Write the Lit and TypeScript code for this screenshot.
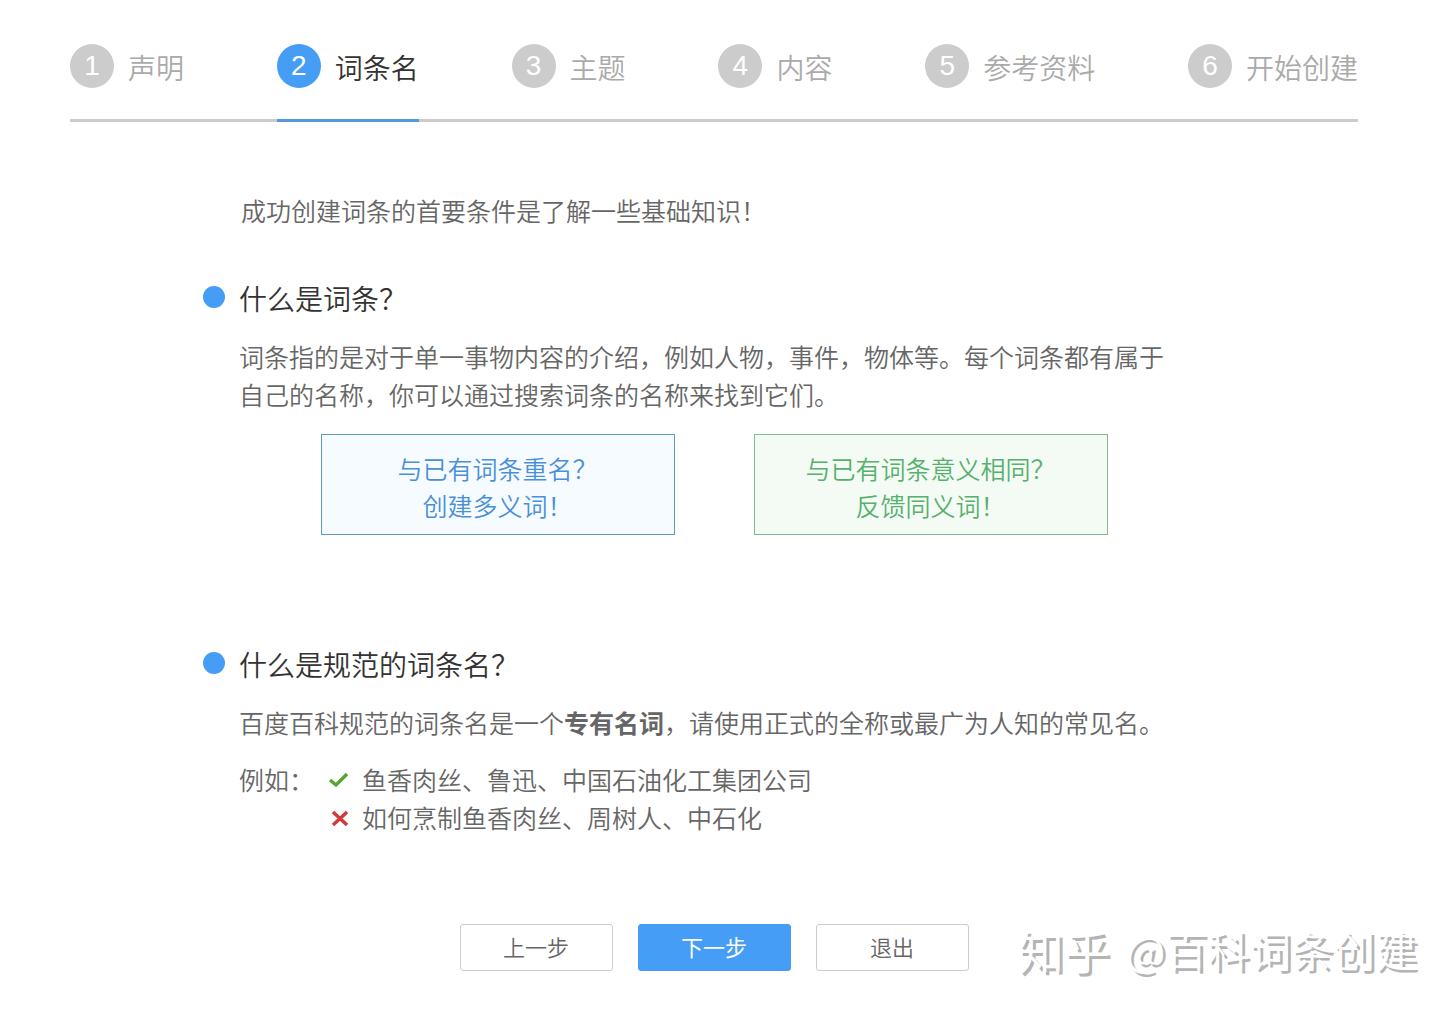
import { LitElement, html, css, svg } from "lit";
import { customElement, property, state } from "lit/decorators.js";
import { classMap } from "lit/directives/class-map.js";

const STEPS = ["声明", "词条名", "主题", "内容", "参考资料", "开始创建"];

@customElement("step-bar")
class StepBar extends LitElement {
  @property({ type: Number }) current = 1;

  static styles = css`
    :host {
      display: block;
    }
    .steps {
      display: flex;
      justify-content: space-between;
      margin: 0;
      padding: 0;
      list-style: none;
      box-shadow: inset 0 -3px #ccc;
    }
    .step {
      display: flex;
      align-items: center;
      gap: 14px;
      padding-bottom: 31px;
      border-bottom: 3px solid transparent;
      color: #aaa;
      font-size: 28px;
      line-height: 44px;
      white-space: nowrap;
    }
    .number {
      width: 44px;
      height: 44px;
      border-radius: 50%;
      background: #ccc;
      color: #fff;
      font-family: "Liberation Sans", Arial, sans-serif;
      text-align: center;
    }
    .step.active {
      border-bottom-color: #5599dd;
      color: #333;
    }
    .step.active .number {
      background: #459df5;
    }
    .label {
      padding-top: 3px;
      line-height: 41px;
    }
  `;

  render() {
    return html`
      <ol class="steps">
        ${STEPS.map((label, i) => {
          const active = i + 1 === this.current;
          return html`<li class=${classMap({ step: true, active })} aria-current=${active ? "step" : "false"}>
            <span class="number">${i + 1}</span><span class="label">${label}</span>
          </li>`;
        })}
      </ol>
    `;
  }
}

const check = svg`<path d="M2 11 L8 16 L19 5" fill="none" stroke="#55a532" stroke-width="3.4"/>`;
const cross = svg`<path d="M5 5 L19 18 M19 5 L5 18" fill="none" stroke="#d23a3a" stroke-width="3.4"/>`;

@customElement("app-root")
class AppRoot extends LitElement {
  @state() private step = 2;

  static styles = css`
    :host {
      display: block;
      position: relative;
      box-sizing: border-box;
      min-height: 100vh;
      padding: 44px 96px 41px 70px;
      background: #fff;
      color: #666;
      font-family: "Noto Sans CJK SC", sans-serif;
      font-size: 25px;
      font-weight: 350;
      line-height: 38px;
    }
    p,
    h2,
    dl,
    dd {
      margin: 0;
    }
    .content {
      max-width: 1022px;
      margin: 69px auto 0;
    }
    .intro {
      padding-left: 38px;
    }
    .topic {
      margin-top: 50px;
    }
    .topic + .topic {
      margin-top: 110px;
    }
    .heading {
      display: flex;
      align-items: center;
      gap: 14px;
      color: #333;
      font-size: 28px;
      font-weight: 350;
    }
    .heading::before {
      content: "";
      width: 22px;
      height: 22px;
      margin-bottom: 2px;
      border-radius: 50%;
      background: #459df5;
    }
    .text {
      padding: 20px 50px 0 36px;
    }
    .text strong {
      font-weight: 700;
    }
    .cards {
      display: flex;
      justify-content: center;
      gap: 79px;
      padding-top: 21px;
    }
    .card {
      box-sizing: border-box;
      flex: 0 1 354px;
      padding: 15px 12px 10px;
      border: 1px solid #5b9bc0;
      background: #f6fbff;
      color: #4a90d9;
      line-height: 37px;
      text-align: center;
      text-decoration: none;
    }
    .card.green {
      border-color: #7dbd8f;
      background: #f4fbf4;
      color: #56b06e;
    }
    .line {
      display: block;
    }
    .examples {
      display: flex;
      gap: 14px;
      padding: 19px 0 0 36px;
    }
    .example {
      display: flex;
      align-items: center;
      gap: 14px;
    }
    .mark {
      width: 20px;
      height: 20px;
    }
    .actions {
      display: flex;
      justify-content: center;
      gap: 25px;
      margin-top: 88px;
    }
    .button {
      width: 153px;
      height: 47px;
      padding: 0 0 4px;
      border: 1px solid #ccc;
      border-radius: 3px;
      background: #fff;
      color: #666;
      font: inherit;
      font-size: 22px;
      cursor: pointer;
    }
    .button.primary {
      border-color: #459df5;
      background: #459df5;
      color: #fff;
      font-weight: 400;
    }
    .watermark {
      position: absolute;
      right: 37px;
      bottom: 32px;
      display: flex;
      align-items: center;
      gap: 16px;
      color: #fff;
      font-size: 42px;
      line-height: 62px;
      text-shadow: 3px 3px #b4b4b4;
      white-space: nowrap;
      pointer-events: none;
    }
    .site {
      font-size: 46px;
      font-weight: 400;
    }
  `;

  private go(delta: number) {
    this.step = Math.min(STEPS.length, Math.max(1, this.step + delta));
  }

  render() {
    return html`
      <step-bar .current=${this.step}></step-bar>
      <main class="content">
        <p class="intro">成功创建词条的首要条件是了解一些基础知识！</p>

        <section class="topic">
          <h2 class="heading">什么是词条？</h2>
          <p class="text">词条指的是对于单一事物内容的介绍，例如人物，事件，物体等。每个词条都有属于自己的名称，你可以通过搜索词条的名称来找到它们。</p>
          <div class="cards">
            <a class="card" href="#polysemy"><span class="line">与已有词条重名？</span><span class="line">创建多义词！</span></a>
            <a class="card green" href="#synonym"><span class="line">与已有词条意义相同？</span><span class="line">反馈同义词！</span></a>
          </div>
        </section>

        <section class="topic">
          <h2 class="heading">什么是规范的词条名？</h2>
          <p class="text">百度百科规范的词条名是一个<strong>专有名词</strong>，请使用正式的全称或最广为人知的常见名。</p>
          <dl class="examples">
            <dt>例如：</dt>
            <div>
              <dd class="example"><svg class="mark" viewBox="0 0 20 20" aria-hidden="true">${check}</svg>鱼香肉丝、鲁迅、中国石油化工集团公司</dd>
              <dd class="example"><svg class="mark" viewBox="0 0 20 20" aria-hidden="true">${cross}</svg>如何烹制鱼香肉丝、周树人、中石化</dd>
            </div>
          </dl>
        </section>
      </main>
      <div class="actions">
        <button class="button" type="button" @click=${() => this.go(-1)}>上一步</button>
        <button class="button primary" type="button" @click=${() => this.go(1)}>下一步</button>
        <button class="button" type="button">退出</button>
      </div>
      <div class="watermark"><span class="site">知乎</span><span>@百科词条创建</span></div>
    `;
  }
}
